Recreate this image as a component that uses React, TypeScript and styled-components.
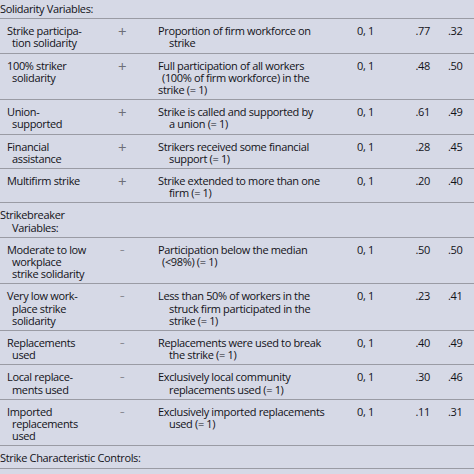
import React from 'react';
import styled, { createGlobalStyle } from 'styled-components';

const GlobalStyle = createGlobalStyle`
  html, body {
    margin: 0;
    padding: 0;
    background: #d6d9e6;
  }
  body {
    font-family: "Open Sans", "Noto Sans", sans-serif;
    color: #121218;
    overflow: hidden;
  }
`;

type Row = {
  name: string[];
  sign: string;
  desc: string[];
  range: string;
  mean: string;
  sd: string;
};

type Section = { title: string[]; rows: Row[] };

const sections: Section[] = [
  {
    title: ['Solidarity Variables:'],
    rows: [
      { name: ['Strike participa-', 'tion solidarity'], sign: '+', desc: ['Proportion of firm workforce on', 'strike'], range: '0, 1', mean: '.77', sd: '.32' },
      { name: ['100% striker', 'solidarity'], sign: '+', desc: ['Full participation of all workers', '~(100% of firm workforce) in the', '^strike (= 1)'], range: '0, 1', mean: '.48', sd: '.50' },
      { name: ['Union-', 'supported'], sign: '+', desc: ['Strike is called and supported by', 'a union (= 1)'], range: '0, 1', mean: '.61', sd: '.49' },
      { name: ['Financial', 'assistance'], sign: '+', desc: ['Strikers received some financial', 'support (= 1)'], range: '0, 1', mean: '.28', sd: '.45' },
      { name: ['Multifirm strike'], sign: '+', desc: ['Strike extended to more than one', 'firm (= 1)'], range: '0, 1', mean: '.20', sd: '.40' },
    ],
  },
  {
    title: ['Strikebreaker', 'Variables:'],
    rows: [
      { name: ['Moderate to low', 'workplace', 'strike solidarity'], sign: '–', desc: ['Participation below the median', '~(<98%) (= 1)'], range: '0, 1', mean: '.50', sd: '.50' },
      { name: ['Very low work-', 'place strike', 'solidarity'], sign: '–', desc: ['Less than 50% of workers in the', 'struck firm participated in the', 'strike (= 1)'], range: '0, 1', mean: '.23', sd: '.41' },
      { name: ['Replacements', 'used'], sign: '–', desc: ['Replacements were used to break', 'the strike (= 1)'], range: '0, 1', mean: '.40', sd: '.49' },
      { name: ['Local replace-', 'ments used'], sign: '–', desc: ['Exclusively local community', 'replacements used (= 1)'], range: '0, 1', mean: '.30', sd: '.46' },
      { name: ['Imported', 'replacements', 'used'], sign: '–', desc: ['Exclusively imported replacements', 'used (= 1)'], range: '0, 1', mean: '.11', sd: '.31' },
    ],
  },
  {
    title: ['Strike Characteristic Controls:'],
    rows: [],
  },
];

const Table = styled.div`
  width: 474px;
  font-size: 11px;
  letter-spacing: -0.35px;
  line-height: 12.2px;
  margin-top: -3px;
`;

const BodyRow = styled.div`
  display: grid;
  grid-template-columns: 95px 40px 215px 40px 33px 44px;
  padding: 6px 0 3px 7px;
  border-bottom: 1px solid #9a9ba4;
`;

const HeadRow = styled.div`
  padding: 6px 0 3px 0;
  border-bottom: 1px solid #9a9ba4;
`;

const EmptyRow = styled.div`
  height: 7px;
`;

const Cell = styled.div<{ $align?: 'left' | 'center' | 'right'; $pad?: number }>`
  text-align: ${(p) => p.$align || 'left'};
  padding-left: ${(p) => p.$pad || 0}px;
  white-space: nowrap;
`;

const Sign = styled(Cell)<{ $dash?: boolean }>`
  color: #6e6f78;
  font-size: ${(p) => (p.$dash ? '9px' : '15px')};
  line-height: 12.2px;
`;

const Line = styled.div<{ $indent: number }>`
  padding-left: ${(p) => p.$indent}px;
`;

function Lines({ lines, indent, small }: { lines: string[]; indent: number; small?: number }) {
  return (
    <>
      {lines.map((l, i) => {
        let ind = i === 0 ? 0 : indent;
        let text = l;
        if (l.startsWith('^')) {
          ind = 0;
          text = l.slice(1);
        } else if (l.startsWith('~')) {
          ind = small ?? indent;
          text = l.slice(1);
        }
        return (
          <Line key={i} $indent={ind}>
            {text}
          </Line>
        );
      })}
    </>
  );
}

export default function App() {
  return (
    <>
      <GlobalStyle />
      <Table>
        {sections.map((s) => (
          <React.Fragment key={s.title.join(' ')}>
            <HeadRow>
              <Lines lines={s.title} indent={12} />
            </HeadRow>
            {s.rows.map((r) => (
              <BodyRow key={r.name.join(' ')}>
                <Cell>
                  <Lines lines={r.name} indent={5} />
                </Cell>
                <Sign $align="center" $dash={r.sign !== '+'}>
                  {r.sign}
                </Sign>
                <Cell $pad={16}>
                  <Lines lines={r.desc} indent={11} small={4} />
                </Cell>
                <Cell>{r.range}</Cell>
                <Cell $align="right">{r.mean}</Cell>
                <Cell $pad={18}>{r.sd}</Cell>
              </BodyRow>
            ))}
          </React.Fragment>
        ))}
        <EmptyRow />
      </Table>
    </>
  );
}
